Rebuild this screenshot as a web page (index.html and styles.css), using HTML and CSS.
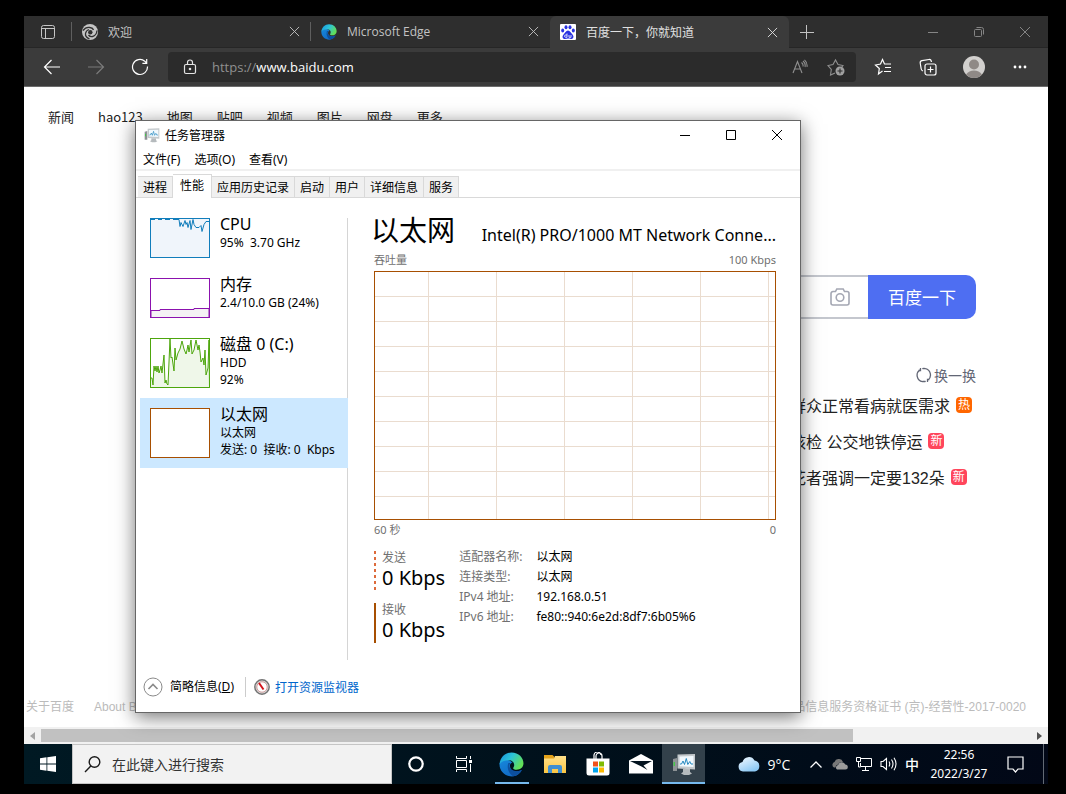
FILE: index.html
```html
<!DOCTYPE html>
<html lang="zh-CN">
<head>
<meta charset="utf-8">
<meta name="viewport" content="width=device-width, initial-scale=1">
<title>百度一下，你就知道</title>
<link rel="stylesheet" href="styles.css">
</head>
<body>
<svg class="defs" aria-hidden="true">
  <defs>
    <linearGradient id="edge-top" x1="0" y1="0" x2="1" y2="0.5"><stop offset="0" stop-color="#1590df"/><stop offset="0.5" stop-color="#2cc3d8"/><stop offset="1" stop-color="#62df58"/></linearGradient>
    <linearGradient id="edge-left" x1="0" y1="0" x2="0.6" y2="1"><stop offset="0" stop-color="#1688dc"/><stop offset="1" stop-color="#1169c4"/></linearGradient>
    <linearGradient id="cloud-fill" x1="0" y1="0" x2="0.6" y2="1"><stop offset="0" stop-color="#f4faff"/><stop offset="1" stop-color="#8cc8f4"/></linearGradient>
    <linearGradient id="folder-fill" x1="0" y1="0" x2="0" y2="1"><stop offset="0" stop-color="#ffe08a"/><stop offset="1" stop-color="#fbc642"/></linearGradient>
  </defs>
  <symbol id="edge" viewBox="0 0 24 24">
    <path d="M.5 12C.5 8 5 6.500 9.800 8L13 10C10 10.500 10 14 11.500 16.500 14 19.500 19 19 21.800 17.400 19.800 21.300 16.400 23.500 12.600 23.500 6 23.500.5 18.500.5 12Z" fill="url(#edge-left)"/>
    <path d="M9 10.500C7.500 14 8.500 20 13.500 23.400 17 23 20 21 21.800 17.800 21.900 17.300 21.500 17.300 21.200 17.500 16 19.800 11.500 17.800 10.300 15 9.600 13 10 11.500 11 10.500Z" fill="#0c4f9e"/>
    <path d="M.5 12C1 5 6 .5 12 .5 19 .5 23.500 5.500 23.500 10.800 23.500 15 20.400 17 17 17 14 17 12.900 15.900 14 14.600 15.700 12 13.800 8.200 9.800 8 5.500 7.800 1.500 9.500.5 12Z" fill="url(#edge-top)"/>
  </symbol>
  <symbol id="monitor" viewBox="0 0 24 24">
    <path d="M1 7l4-1v13H1z" fill="#8d9295"/><path d="M1.500 10h1.500v4h-1.500z" fill="#45c54a"/>
    <path d="M11 17h7v3l2 1.500-3 1.500h-5l-3-1.500 2-1.500z" fill="#b5babd"/>
    <path d="M5.500 2.500L23 2v15.500l-17.500-1z" fill="#c4c9cc"/>
    <path d="M7.500 4.500L21.500 4v11l-14-.7z" fill="#f0f8fd"/>
    <path d="M8 12h1.500l1.500-3 1.500 3.500 1.800-6 1.500 6 2-3 1.200 2.500h2" fill="none" stroke="#2589c0"/>
  </symbol>
  <symbol id="close" viewBox="0 0 12 12"><path d="M1 1l10 10M11 1L1 11" fill="none" stroke="currentColor"/></symbol>
</svg>

<div class="display">
  <div class="screen">
    <section class="browser" aria-label="Microsoft Edge">
      <header class="tabstrip">
        <button class="tab-menu" aria-label="标签页操作">
          <svg width="14" height="14" viewBox="0 0 14 14" fill="none" stroke="#c6c6c6"><rect x=".5" y=".5" width="13" height="13" rx="2"/><path d="M1 3.500h12M4.500 4v9"/></svg>
        </button>
        <div class="tab">
          <svg width="16" height="16" viewBox="0 0 16 16"><circle cx="8" cy="8" r="8" fill="#c4c4c4"/><g fill="none" stroke="#303030" stroke-width="1.300"><path d="M1 6.500Q4 2.500 8 3.500q3 .5 3.500 2.500"/><path d="M7.500 15Q3 13 3.500 9.500 4 6.500 7 5.500"/><path d="M15 6.500q-.5 5-4.500 6-2.500.5-4-1.500"/></g><circle cx="8.300" cy="8.300" r="2.200" fill="#303030"/></svg>
          <span class="tab-name">欢迎</span>
          <button class="tab-close" aria-label="关闭标签页"><svg width="11" height="11"><use href="#close"/></svg></button>
        </div>
        <div class="tab">
          <svg width="16" height="16"><use href="#edge"/></svg>
          <span class="tab-name">Microsoft Edge</span>
          <button class="tab-close" aria-label="关闭标签页"><svg width="11" height="11"><use href="#close"/></svg></button>
        </div>
        <div class="tab tab-active">
          <svg width="16" height="16" viewBox="0 0 16 16"><rect width="16" height="16" rx="1" fill="#fff"/><g fill="#2932e1"><ellipse cx="2.700" cy="6.500" rx="1.500" ry="1.900"/><ellipse cx="6" cy="3.200" rx="1.500" ry="2"/><ellipse cx="10" cy="3.200" rx="1.500" ry="2"/><ellipse cx="13.300" cy="6.500" rx="1.500" ry="1.900"/><path d="M8 6.500c2 0 3 2.500 4.500 4 2 2.500.5 4.500-1.500 4.500-1.500 0-2-.4-3-.4s-2 .4-3 .4c-2 0-3.500-2-1.500-4.500C5 9 6 6.500 8 6.500z"/></g><path d="M7 9.500v3.800H5.700a1 1 0 0 1 0-2.300H7M9 11v2.300h2V11" fill="none" stroke="#fff" stroke-width=".8"/></svg>
          <span class="tab-name">百度一下，你就知道</span>
          <button class="tab-close" aria-label="关闭标签页"><svg width="11" height="11"><use href="#close"/></svg></button>
        </div>
        <button class="new-tab" aria-label="新建标签页"><svg width="14" height="14" viewBox="0 0 14 14" stroke="currentColor"><path d="M6.500 0v14M0 7.500h14"/></svg></button>
        <div class="browser-controls">
          <button aria-label="最小化"><svg width="10" height="10" viewBox="0 0 10 10" stroke="currentColor"><path d="M0 5.500h10"/></svg></button>
          <button aria-label="还原"><svg width="10" height="10" viewBox="0 0 10 10" fill="none" stroke="currentColor"><rect x=".5" y="2.500" width="7" height="7" rx="1"/><path d="M2.500 .5h5a2 2 0 0 1 2 2v5"/></svg></button>
          <button aria-label="关闭"><svg width="12" height="12"><use href="#close"/></svg></button>
        </div>
      </header>

      <div class="toolbar">
        <div class="history">
          <button aria-label="后退"><svg width="18" height="16" viewBox="0 0 18 16" fill="none" stroke="#fff" stroke-width="1.200"><path d="M17 8H1.500M8.500 1l-7 7 7 7"/></svg></button>
          <button aria-label="前进"><svg width="18" height="16" viewBox="0 0 18 16" fill="none" stroke="#7b7b7b" stroke-width="1.200"><path d="M1 8h15.500M9.500 1l7 7-7 7"/></svg></button>
          <button aria-label="刷新"><svg width="18" height="18" viewBox="0 0 18 18" fill="none" stroke="#fff" stroke-width="1.200"><path d="M16.500 8.500a7.500 7.500 0 1 1-2.700-5.300l1.700 1.800M15.700 1v4.300h-4.300"/></svg></button>
        </div>
        <div class="address">
          <svg width="14" height="16" viewBox="0 0 14 16" fill="none" stroke="#e4e4e4" stroke-width="1.200"><rect x="1.500" y="5.500" width="11" height="9" rx="1.500"/><path d="M4.500 5.500V3.500a2.500 2.500 0 0 1 5 0v2"/><circle cx="7" cy="10" r=".7" fill="#fff"/></svg>
          <label class="scheme" for="address">https://</label><input id="address" type="text" value="www.baidu.com">
          <button aria-label="大声朗读"><svg width="16" height="16" viewBox="0 0 16 16" fill="none" stroke="#909090" stroke-width="1.100"><path d="M1 14L5.500 2.500 10 14M2.600 10h5.800M9.500 3.500a4 4 0 0 1 1.500 4M11 2a6 6 0 0 1 2 6M12.500 .8a8 8 0 0 1 2.500 7"/></svg></button>
          <button aria-label="收藏此页"><svg width="18" height="18" viewBox="0 0 18 18" fill="none" stroke="#909090" stroke-width="1.100"><path d="M8 15l-4.500 2 .8-5.500L1 7.500 6 6.500 8.500 2 11 6.500l5 1-1.500 2"/><circle cx="13" cy="13" r="4.500" fill="#a0a0a0" stroke="none"/><path d="M13 10.500v5M10.500 13h5" stroke="#2b2b2b"/></svg></button>
        </div>
        <div class="tools">
          <button aria-label="收藏夹"><svg width="18" height="18" viewBox="0 0 18 18" fill="none" stroke="#fff" stroke-width="1.200"><path d="M8.500 13l-4 3 .8-5.500L1.500 7 6.500 6l2-4.500L10.500 6H17M11 9.500h6M10 13.500h7"/></svg></button>
          <button aria-label="集锦"><svg width="18" height="18" viewBox="0 0 18 18" fill="none" stroke="#fff" stroke-width="1.200"><rect x="6" y="6" width="11" height="11" rx="2"/><path d="M11.500 8.500v6M8.500 11.500h6M4 13q-1.500-.5-1.800-2L1.200 5Q1 3 3 2.700L10 1.500q2-.3 2.500 2.500"/></svg></button>
          <button aria-label="个人资料"><svg width="22" height="22" viewBox="0 0 22 22"><circle cx="11" cy="11" r="11" fill="#d2d0ce"/><circle cx="11" cy="8.500" r="5" fill="#8f8986"/><path d="M3 18.500q3-4 8-4t8 4q-3.500 3.500-8 3.500t-8-3.500z" fill="#8f8986"/></svg></button>
          <button aria-label="设置及其他"><svg width="14" height="4" viewBox="0 0 14 4" fill="#fff"><circle cx="2" cy="2" r="1.400"/><circle cx="7" cy="2" r="1.400"/><circle cx="12" cy="2" r="1.400"/></svg></button>
        </div>
      </div>

      <div class="page">
        <nav class="page-nav">
          <a href="#">新闻</a><a href="#">hao123</a><a href="#">地图</a><a href="#">贴吧</a><a href="#">视频</a><a href="#">图片</a><a href="#">网盘</a><a href="#">更多</a>
        </nav>
        <form class="search">
          <div class="search-box">
            <input type="text" aria-label="搜索内容">
            <button type="button" aria-label="按图片搜索"><svg width="20" height="18" viewBox="0 0 20 18" fill="none" stroke="#a4a7b3" stroke-width="1.600"><path d="M3 3.500h2.500l1.300-2.500h6.400l1.300 2.500H17a2 2 0 0 1 2 2V15a2 2 0 0 1-2 2H3a2 2 0 0 1-2-2V5.500a2 2 0 0 1 2-2z"/><circle cx="10" cy="9.500" r="3.800"/></svg></button>
          </div>
          <button class="search-go" type="button">百度一下</button>
        </form>
        <section class="hot">
          <a class="refresh" href="#"><svg width="16" height="16" viewBox="0 0 16 16" fill="none" stroke="#626675" stroke-width="1.300"><path d="M6.500 14.700A6.500 6.500 0 0 1 4 2.900M4.500 1v2.500H2.500M9.500 1.700A6.500 6.500 0 0 1 12 13.100M11.500 15v-2.500h2M6.300 1.700A6.500 6.500 0 0 1 9.500 1.700M9.700 14.300A6.500 6.500 0 0 1 6.500 14.300"/></svg>换一换</a>
          <ul>
            <li><a href="#">群众正常看病就医需求</a><span class="badge badge-hot">热</span></li>
            <li><a href="#">核检 公交地铁停运</a><span class="badge">新</span></li>
            <li><a href="#">花者强调一定要132朵</a><span class="badge">新</span></li>
          </ul>
        </section>
        <footer class="page-footer">
          <div class="about"><a href="#">关于百度</a><a href="#">About Baidu</a></div>
          <span>品信息服务资格证书 (京)-经营性-2017-0020</span>
        </footer>
      </div>

      <div class="scrollbar">
        <button aria-label="向左滚动"><svg width="5" height="8" viewBox="0 0 5 8"><path d="M5 0v8L0 4z" fill="#a3a3a3"/></svg></button>
        <div class="track"><div class="thumb"></div></div>
        <button aria-label="向右滚动"><svg width="5" height="8" viewBox="0 0 5 8"><path d="M0 0v8l5-4z" fill="#505050"/></svg></button>
      </div>
    </section>

    <footer class="taskbar">
      <button class="start" aria-label="开始"><svg width="16" height="16" viewBox="0 0 16 16" fill="#fff"><path d="M0 2.200l6.500-.9v6.200H0zM7.300 1.200L16 0v7.500H7.300zM0 8.400h6.500v6.300L0 13.800zM7.300 8.400H16V16l-8.700-1.200z"/></svg></button>
      <label class="task-search">
        <svg width="17" height="17" viewBox="0 0 17 17" fill="none" stroke="#1b1b1b" stroke-width="1.400"><circle cx="10.500" cy="6" r="5.300"/><path d="M6.800 10L1 16"/></svg>
        <input type="text" placeholder="在此键入进行搜索" aria-label="搜索">
      </label>
      <button class="wide" aria-label="Cortana"><svg width="18" height="18" viewBox="0 0 18 18"><circle cx="9" cy="9" r="6.700" fill="none" stroke="#fff" stroke-width="2.200"/></svg></button>
      <button class="wide" aria-label="任务视图"><svg width="16" height="16" viewBox="0 0 16 16" fill="none" stroke="#fff"><path d="M.5 0v2.500h10V0M.5 16v-2.500h10V16M.5 4.500h10v7H.5zM14.500 0v3M14.500 8v8"/><path d="M13 4h3v3h-3z" fill="#fff" stroke="none"/></svg></button>
      <div class="apps">
        <button class="app running" aria-label="Microsoft Edge"><svg width="25" height="25"><use href="#edge"/></svg></button>
        <button class="app" aria-label="文件资源管理器"><svg width="22" height="19" viewBox="0 0 22 19"><path d="M0 0h8.500l2 2v3H0z" fill="#e3a21a"/><path d="M0 3.500h10l1-2.500h11v17H0z" fill="url(#folder-fill)"/><path d="M4 18v-6q0-2 2-2h10q2 0 2 2v6h-4v-4H8v4z" fill="#3f8fd2"/></svg></button>
        <button class="app" aria-label="Microsoft Store"><svg width="24" height="24" viewBox="0 0 24 24"><path d="M8 7V4a3 3 0 0 1 7-1M10 7V4a3 3 0 0 1 6 0v3" fill="none" stroke="#fff" stroke-width="1.200"/><path d="M.5 6.500h23V21q0 2.500-2.500 2.500H3Q.5 23.500.5 21z" fill="#fff"/><path d="M7 9.500h5v5H7z" fill="#f1511b"/><path d="M13 9.500h5v5h-5z" fill="#80bb01"/><path d="M7 15.500h5v5H7z" fill="#00a4ef"/><path d="M13 15.500h5v5h-5z" fill="#fbb900"/></svg></button>
        <button class="app" aria-label="邮件"><svg width="24" height="20" viewBox="0 0 24 20"><path d="M0 6.500L12 0l12 6.500V19.500H0z" fill="#fff"/><path d="M1 7h22l-8.500 4.500 4 4.500-6-3.500z" fill="#03131f"/></svg></button>
        <button class="app running current" aria-label="任务管理器"><svg width="24" height="24"><use href="#monitor"/></svg></button>
      </div>
      <div class="tray">
        <button class="weather"><svg width="22" height="16" viewBox="0 0 22 16"><path d="M5 15.500a4.800 4.800 0 0 1-.5-9.500A6.500 6.500 0 0 1 16.500 4.500a5.600 5.600 0 0 1 .5 11z" fill="url(#cloud-fill)"/></svg>9°C</button>
        <button aria-label="显示隐藏的图标"><svg width="12" height="7" viewBox="0 0 12 7" fill="none" stroke="#fff" stroke-width="1.300"><path d="M.5 6.500L6 1l5.500 5.500"/></svg></button>
        <button aria-label="OneDrive"><svg width="16" height="11" viewBox="0 0 16 11"><path d="M2 8.500A3 3 0 0 1 2.500 3 4.500 4.500 0 0 1 11 3Q7.500 2.500 6 5.500 3.500 6 3.500 8.500z" fill="#777"/><path d="M5 10.500A2.500 2.500 0 0 1 6 6 4 4 0 0 1 13.300 5.500a2.500 2.500 0 0 1 0 5z" fill="#9b9b9b"/></svg></button>
        <button aria-label="网络"><svg width="16" height="14" viewBox="0 0 16 14" fill="none" stroke="#fff"><path d="M5 1.500h10.500v8H4.500V6M9.500 10v3M6 13.500h7M.5 .5h4v4h-4zM2.500 5v5h2"/></svg></button>
        <button aria-label="音量"><svg width="17" height="14" viewBox="0 0 17 14" fill="none" stroke="#fff" stroke-width="1.100"><path d="M1 4.500h2L6.500 1.500v11L3 9.500H1zM9 4.500q1.500 2.500 0 5M11.500 2.500q3 4.500 0 9M14 .8q4 6 0 12.400"/></svg></button>
        <button class="ime">中</button>
        <button class="clock"><time>22:56</time><time>2022/3/27</time></button>
        <button class="notify" aria-label="操作中心"><svg width="17" height="17" viewBox="0 0 17 17" fill="none" stroke="#fff" stroke-width="1.200"><path d="M1 1h15v12h-5l-2.500 3L6 13H1z"/></svg></button>
      </div>
    </footer>

    <section class="manager" aria-label="任务管理器">
      <header class="titlebar">
        <svg width="16" height="16"><use href="#monitor"/></svg>
        <h1>任务管理器</h1>
        <div class="window-controls">
          <button aria-label="最小化"><svg width="10" height="10" viewBox="0 0 10 10" stroke="#000"><path d="M0 5.500h10"/></svg></button>
          <button aria-label="最大化"><svg width="10" height="10" viewBox="0 0 10 10" fill="none" stroke="#000"><path d="M.5 .5h9v9h-9z"/></svg></button>
          <button aria-label="关闭"><svg width="12" height="12"><use href="#close"/></svg></button>
        </div>
      </header>
      <nav class="menubar"><button>文件(F)</button><button>选项(O)</button><button>查看(V)</button></nav>
      <div class="views" role="tablist">
        <button role="tab">进程</button><button role="tab" class="selected" aria-selected="true">性能</button><button role="tab">应用历史记录</button><button role="tab">启动</button><button role="tab">用户</button><button role="tab">详细信息</button><button role="tab">服务</button>
      </div>
      <div class="performance">
        <ul class="resources">
          <li><button class="resource">
            <svg class="spark" width="60" height="40" viewBox="0 0 60 40" fill="#f0f5fb" stroke="#117dbb"><rect x=".5" y=".5" width="59" height="39"/><path d="M1 1.500h4M8 1.500h4M15 1.500h5M23 1.500h6l1 7 1-4 2 4 2-6 1 4 1-2 1 5 2-7 1 9 2-10 1 5 2 3h3l2-2 1 6 2-7 2-3h3l1 2" fill="none"/></svg>
            <span class="info"><strong>CPU</strong><span>95%&nbsp; 3.70 GHz</span></span></button></li>
          <li><button class="resource">
            <svg class="spark" width="60" height="40" viewBox="0 0 60 40" fill="#fff" stroke="#8b12ae"><rect x=".5" y=".5" width="59" height="39"/><path d="M1 32.500h9v-1h34v-1h15v9H1z" fill="#f4f2f4"/></svg>
            <span class="info"><strong>内存</strong><span>2.4/10.0 GB (24%)</span></span></button></li>
          <li><button class="resource">
            <svg class="spark" width="60" height="50" viewBox="0 0 60 50" fill="#eff7e9" stroke="#4da60c"><rect x=".5" y=".5" width="59" height="49" fill="#fff"/><path d="M.5 49.500V40H2L3 47 4 28 5 33 6 28 7 34 8 28 9 35 10 32 11 28 12 35 14 17 15 45 16 42 17 46 18 47 20 1 21 20 22 19 24 33 25 10 26 22 28 15 30 11 31 7 32 3 34 11 36 16 37 12 38 7 39 14 41 2 42 16 44 12 46 2 48 12 49 7 50 14 51 24 53 20 54 27 55 12 56 37 58 30 59 2 59.500 49.500Z"/></svg>
            <span class="info"><strong>磁盘 0 (C:)</strong><span>HDD</span><span>92%</span></span></button></li>
          <li><button class="resource chosen">
            <svg class="spark" width="60" height="50" viewBox="0 0 60 50" fill="#fff" stroke="#a74f01"><rect x=".5" y=".5" width="59" height="49"/></svg>
            <span class="info"><strong>以太网</strong><span>以太网</span><span>发送: 0&nbsp; 接收: 0&nbsp; Kbps</span></span></button></li>
        </ul>
        <div class="detail">
          <div class="detail-head"><h2>以太网</h2><span>Intel(R) PRO/1000 MT Network Conne...</span></div>
          <div class="scale"><span>吞吐量</span><span>100 Kbps</span></div>
          <div class="chart"></div>
          <div class="scale"><span>60 秒</span><span>0</span></div>
          <div class="stats">
            <dl class="rates">
              <div class="rate sent"><dt>发送</dt><dd>0 Kbps</dd></div>
              <div class="rate"><dt>接收</dt><dd>0 Kbps</dd></div>
            </dl>
            <dl class="facts">
              <dt>适配器名称:</dt><dd>以太网</dd>
              <dt>连接类型:</dt><dd>以太网</dd>
              <dt>IPv4 地址:</dt><dd>192.168.0.51</dd>
              <dt>IPv6 地址:</dt><dd>fe80::940:6e2d:8df7:6b05%6</dd>
            </dl>
          </div>
        </div>
      </div>
      <footer class="manager-footer">
        <button class="fewer"><svg width="20" height="20" viewBox="0 0 20 20" fill="none" stroke="#8a8a8a"><circle cx="10" cy="10" r="9"/><path d="M5.500 12L10 7.500l4.500 4.500" stroke-width="1.600"/></svg><span>简略信息(<u>D</u>)</span></button>
        <a class="monitor-link" href="#"><svg width="16" height="16" viewBox="0 0 16 16"><circle cx="8" cy="8" r="7.200" fill="#d9d9d9" stroke="#737373" stroke-width="1.400"/><circle cx="8" cy="8" r="5.200" fill="#fff" stroke="#c98a8a" stroke-width=".8"/><path d="M5 4l4.500 6.500" stroke="#d3131b" stroke-width="2"/></svg>打开资源监视器</a>
      </footer>
    </section>
  </div>
</div>
</body>
</html>
```
FILE: styles.css
```css
* { box-sizing: border-box; }
body, h1, h2, ul, dl, dd { margin: 0; padding: 0; }
body {
  background: #000;
  color: #000;
  font-family: "Noto Sans", "Noto Sans CJK SC", sans-serif;
  font-size: 12px;
}
ul { list-style: none; }
a { color: inherit; text-decoration: none; }
button, input { font: inherit; color: inherit; background: none; border: 0; padding: 0; margin: 0; }
button { display: flex; align-items: center; justify-content: center; white-space: nowrap; }
input { min-width: 0; outline: 0; }
svg { display: block; flex: none; }
.defs { position: absolute; width: 0; height: 0; }

.display { display: grid; min-height: 100vh; padding: 16px 18px 10px 24px; }
.screen { position: relative; display: flex; flex-direction: column; min-width: 0; overflow: hidden; }
.browser { flex: 1; display: flex; flex-direction: column; background: #fff; font-family: "Open Sans", "Noto Sans CJK SC", sans-serif; }

/* Tab strip */
.tabstrip { display: flex; height: 32px; background: #2e2e2e; border-bottom: 1px solid #262626; color: #c3c3c3; }
.tab-menu { width: 48px; }
.tab { position: relative; display: flex; align-items: center; gap: 10px; width: 239px; padding: 0 11px 0 10px; }
.tab::before { content: ""; position: absolute; left: -1px; top: 6px; bottom: 6px; width: 1px; background: #5f5f5f; }
.tab-name { flex: 1; white-space: nowrap; }
.tab-close { width: 11px; height: 11px; }
.tab-active { margin-bottom: -1px; background: #3b3b3b; border-radius: 6px 6px 0 0; color: #e0e0e0; }
.tab-active::before { display: none; }
.new-tab { width: 36px; }
.browser-controls { display: flex; margin-left: auto; color: #858585; }
.browser-controls button { width: 46px; }

/* Address bar */
.toolbar { display: flex; align-items: center; height: 39px; background: #3b3b3b; border-bottom: 1px solid #6c6c6c; }
.history { display: flex; padding: 0 6px; }
.history button { width: 44px; height: 32px; }
.address { flex: 1; display: flex; align-items: center; height: 30px; padding: 0 10px 0 15px; background: #2b2b2b; border-radius: 4px; font-size: 13px; color: #fff; }
.address input { flex: 1; }
.address button { width: 36px; }
.address button:last-child { width: 20px; margin-left: 8px; }
.scheme { margin-left: 15px; color: #909090; }
.tools { display: flex; padding: 0 5px; }
.tools button { width: 46px; height: 32px; }
.tools button:first-child { width: 44px; }

/* Web page */
.page { flex: 1; display: flex; flex-direction: column; color: #222; }
.page-nav { display: flex; align-items: center; gap: 24px; height: 58px; padding-left: 24px; font-family: "Noto Sans CJK SC", sans-serif; font-size: 13px; }
.search { display: flex; justify-content: flex-end; height: 44px; margin: 130px 72px 0; }
.search-box { display: flex; width: 546px; padding-right: 18px; border: 2px solid #c4c7ce; border-right: 0; border-radius: 10px 0 0 10px; }
.search-box input { flex: 1; font-size: 16px; }
.search-go { width: 108px; padding-bottom: 2px; background: #4e6ef2; border-radius: 0 10px 10px 0; color: #fff; font-size: 17px; }
.hot { align-self: flex-end; width: 186px; margin: 46px 72px 0; }
.refresh { display: flex; align-items: center; justify-content: flex-end; gap: 2px; height: 20px; color: #626675; font-size: 14px; }
.hot ul { padding-top: 2px; }
.hot li { display: flex; align-items: center; gap: 6px; height: 36px; font: 16px "Liberation Sans", "Noto Sans CJK SC", sans-serif; white-space: nowrap; }
.badge { width: 16px; background: #ff455b; border-radius: 4px; color: #fff; font-size: 12px; line-height: 16px; text-align: center; }
.badge-hot { background: #ff6600; }
.page-footer { display: flex; justify-content: space-between; margin-top: auto; padding: 0 22px 10px 2px; color: #bbb; font-family: "Liberation Sans", "Noto Sans CJK SC", sans-serif; line-height: 20px; }
.about { display: flex; gap: 20px; }

.scrollbar { display: flex; height: 17px; background: #f1f1f1; }
.scrollbar button { width: 17px; }
.track { flex: 1; padding: 2px 0; }
.thumb { width: 82%; height: 13px; background: #c1c1c1; }

/* Taskbar */
.taskbar { display: flex; height: 40px; background: linear-gradient(90deg, #001923, #00101b 55%, #020817); color: #fff; }
.start, .wide { width: 48px; }
.task-search { display: flex; align-items: center; gap: 11px; flex: 0 1 320px; padding-left: 11px; background: #f2f2f2; border: 1px solid #c5c5c5; color: #333; font-size: 14px; }
.task-search input { flex: 1; }
.task-search input::placeholder { color: #333; opacity: 1; }
.apps { display: flex; padding-left: 2px; }
.app { position: relative; width: 43px; }
.running::after { content: ""; position: absolute; left: 5px; right: 4px; bottom: 0; height: 2px; background: #76b9ed; }
.current { background: #33414b; }
.current::after { left: 0; right: 0; }
.tray { display: flex; margin-left: auto; padding-right: 4px; }
.tray button { width: 24px; }
.tray .weather { gap: 8px; width: 76px; padding-right: 4px; font-family: "Open Sans", sans-serif; font-size: 14px; }
.tray .ime { font-size: 14px; font-weight: 500; }
.tray .clock { flex-direction: column; width: 70px; line-height: 19px; }
.tray .notify { width: 50px; padding-right: 7px; border-right: 1px solid #626a74; }

/* Task manager window */
.manager { position: absolute; inset: 104px 247px 71px 111px; display: flex; flex-direction: column; background: #fff; border: 1px solid #666; box-shadow: 0 4px 18px rgba(0, 0, 0, .55); }
.titlebar { display: flex; align-items: center; gap: 5px; height: 28px; padding-left: 8px; }
.titlebar h1 { font-size: 12px; font-weight: 400; }
.window-controls { display: flex; margin-left: auto; }
.window-controls button { width: 46px; height: 28px; }
.menubar { display: flex; gap: 14px; height: 22px; padding-left: 7px; border-bottom: 2px solid #f0f0f0; }
.views { display: flex; align-items: flex-end; height: 27px; padding-left: 2px; border-bottom: 1px solid #d9d9d9; }
.views button { height: 21px; padding: 0 5px 1px; background: #f0f0f0; border: 1px solid #d9d9d9; border-width: 1px 1px 0 0; }
.views .selected { height: 24px; margin-bottom: -1px; padding: 0 7px 3px; background: #fff; }
.performance { flex: 1; display: flex; padding: 10px 24px 0 4px; }
.resources { flex: 0 0 208px; background: linear-gradient(#d5d5d5, #d5d5d5) right 0 top 10px / 1px 442px no-repeat; }
.resource { display: flex; justify-content: flex-start; align-items: flex-start; gap: 10px; width: 100%; padding: 0 10px; text-align: left; }
.chosen { background: #cce8ff; }
.spark { margin: 10px 0; }
.info { display: flex; flex-direction: column; padding-top: 6px; line-height: 17px; }
.info strong { font-size: 16px; font-weight: 400; line-height: 20px; }
.detail { flex: 1; min-width: 0; padding: 4px 0 0 26px; }
.detail-head { display: flex; justify-content: space-between; align-items: baseline; height: 38px; margin-left: -3px; white-space: nowrap; }
.detail-head h2 { font-size: 28px; font-weight: 400; line-height: 36px; }
.detail-head span { font-size: 16px; }
.scale { display: flex; justify-content: space-between; color: #707070; font-size: 11px; line-height: 20px; }
.chart {
  height: 249px;
  margin-top: 1px;
  border: 1px solid #a74f01;
  background:
    repeating-linear-gradient(90deg, transparent 0 67px, #eadccf 67px 68px) -14px 0 / calc(100% + 14px) 100% no-repeat,
    repeating-linear-gradient(transparent 0 24px, #eadccf 24px 25px);
}
.stats { display: flex; gap: 14px; padding-top: 11px; }
.rates { display: grid; gap: 12px; align-content: start; }
.rate { padding-left: 8px; background: linear-gradient(#a74f01, #a74f01) left / 2px 100% no-repeat; }
.sent { background: repeating-linear-gradient(#dd6b3c 0 3px, transparent 3px 6px) left / 2px 100% no-repeat; }
dt { color: #707070; }
.rate dt { line-height: 14px; }
.rate dd { font-size: 20px; line-height: 26px; white-space: nowrap; }
.facts { display: grid; grid-template-columns: max-content 1fr; column-gap: 14px; line-height: 20px; align-content: start; margin-top: -4px; }
.manager-footer { display: flex; align-items: center; height: 50px; padding-left: 7px; }
.fewer { gap: 7px; padding-right: 11px; border-right: 1px solid #ccc; line-height: 14px; }
.monitor-link { display: flex; align-items: center; gap: 5px; padding-left: 8px; color: #0066cc; }
```
